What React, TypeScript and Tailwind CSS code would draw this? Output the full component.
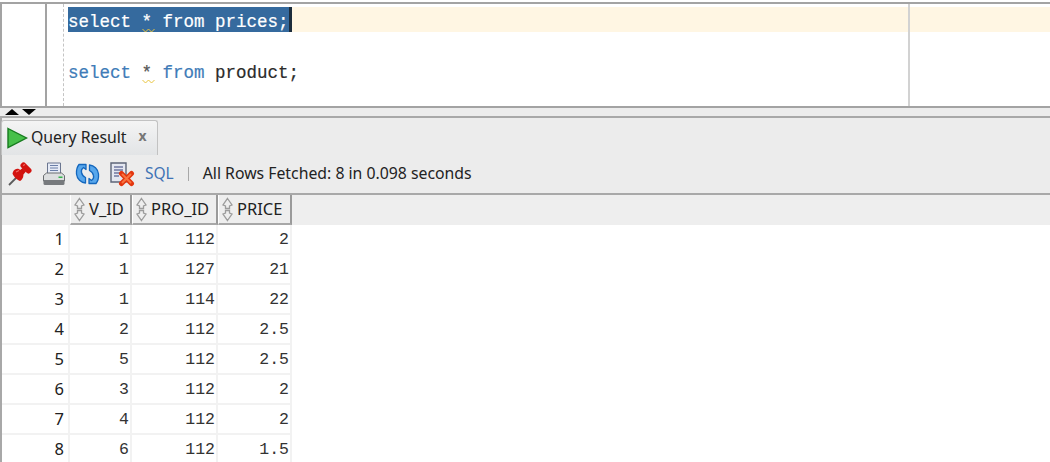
const rows = [
  [1, 1, 112, "2"],
  [2, 1, 127, "21"],
  [3, 1, 114, "22"],
  [4, 2, 112, "2.5"],
  [5, 5, 112, "2.5"],
  [6, 3, 112, "2"],
  [7, 4, 112, "2"],
  [8, 6, 112, "1.5"],
];

const columns = [
  { name: "V_ID", width: "w-[62px]" },
  { name: "PRO_ID", width: "w-[86px]" },
  { name: "PRICE", width: "w-[74px]" },
];

function Squiggle() {
  return (
    <svg width="13" height="5" viewBox="0 0 13 5" className="absolute left-[78px] top-[21px]">
      <path d="M0.5 1l3 3 3-3 3 3 3-3" fill="none" stroke="#e9c53f" strokeWidth="1" />
    </svg>
  );
}

function SortIcon() {
  return (
    <svg width="13" height="25" viewBox="0 0 13 25" className="shrink-0">
      <path d="M6.5 1.5L11 8l-2.5 1v2.5h-4V9L2 8z" fill="#eeeeee" stroke="#9c9c9c" strokeWidth="1.3" />
      <path d="M6.5 23.5L11 17l-2.5-1v-2.5h-4V16L2 17z" fill="#eeeeee" stroke="#9c9c9c" strokeWidth="1.3" />
    </svg>
  );
}

function PinIcon() {
  return (
    <svg width="24" height="24" viewBox="0 0 24 24">
      <path d="M1 23l8-8" stroke="#5a5a5a" strokeWidth="1.8" />
      <path d="M15.5 3.5l5 5" stroke="#d3130f" strokeWidth="6" strokeLinecap="round" />
      <path d="M14.5 6l3.5 3.5-3.5 4-4-4z" fill="#cf120e" />
      <path d="M7 7.5c2-1.2 4-.8 6 1s3 4.500 2 7c-.6 1.500-2 3-3 3.500-3-1-6.500-4.500-7.500-7.500.3-1.500 1-3 2.500-4z" fill="#d3130f" />
      <path d="M8 10l3-1.500" stroke="#f0706a" strokeWidth="1.2" />
      <path d="M15 3.500l2-1" stroke="#f0706a" strokeWidth="1.2" />
    </svg>
  );
}

function PrinterIcon() {
  return (
    <svg width="24" height="24" viewBox="0 0 24 24">
      <path d="M5.500 1h13v11h-13z" fill="#e6ebf6" stroke="#6b7690" />
      <path d="M8 3.500h8M8 6h8M8 8.500h8" stroke="#6b7fa8" />
      <path d="M1.500 13.500L4.500 11h15l3 2.500V19h-21z" fill="#dcdedf" stroke="#6a6d70" />
      <path d="M1.500 18h21v3.500a1.500 1.500 0 0 1-1.500 1.500H3a1.500 1.500 0 0 1-1.500-1.500z" fill="#777a7d" />
      <path d="M16.500 14.500h4v1.500h-4z" fill="#35b54a" />
    </svg>
  );
}

function RefreshIcon() {
  return (
    <svg width="25" height="24" viewBox="0 0 25 24">
      <path d="M4 2.500h7v5l-2.500-2c-1.500 1-2.500 3-2 5 .5 2.500 2 4 4 5V21C6 20.500 2 17 1.500 12 1.200 8.500 2 5 4 2.500z" fill="#58a7ec" stroke="#1467bd" strokeWidth="1.3" strokeLinejoin="round" />
      <path d="M21 21.500h-7v-5l2.500 2c1.500-1 2.500-3 2-5-.5-2.500-2-4-4-5V3c4.500.5 8.500 4 9 9 .3 3.500-.5 7-2.500 9.500z" fill="#58a7ec" stroke="#1467bd" strokeWidth="1.3" strokeLinejoin="round" />
    </svg>
  );
}

function ClearIcon() {
  return (
    <svg width="26" height="26" viewBox="0 0 26 26">
      <path d="M2 2h15v19H2z" fill="#e4e7f0" stroke="#5d6578" strokeWidth="1.4" />
      <path d="M5 6h9M5 9h9M5 12h6M5 15h5" stroke="#6f78a0" strokeWidth="1.4" />
      <path d="M12.500 12.500l10 10M22.500 12.500l-10 10" stroke="#e3360f" strokeWidth="5" strokeLinecap="round" />
      <path d="M13.500 13.500l8 8M21.500 13.500l-8 8" stroke="#f9733f" strokeWidth="2" strokeLinecap="round" />
    </svg>
  );
}

export default function App() {
  return (
    <div className="w-[1050px] h-[462px] overflow-hidden bg-[#ececec] font-['Noto_Sans',sans-serif] text-[#222]">
      {/* Editor */}
      <div className="h-[108px] pt-[2px] bg-white">
        <div className="h-[106px] border-t-2 border-b-2 border-t-[#a3a3a3] border-b-[#a3a3a3] flex bg-white">
          <div className="w-[47px] shrink-0 border-l-2 border-l-[#a3a3a3] border-r-2 border-r-[#a3a3a3]"></div>
          <div className="w-[17px] shrink-0 border-r border-dashed border-r-[#c4c4c4]"></div>
          <div className="flex-1 relative pt-[3px] font-['Liberation_Mono',monospace] text-[17.5px] leading-[31px] [-webkit-text-stroke:0.2px]">
            <div className="absolute left-[4px] right-0 top-[3px] h-[25px] bg-[#fff6e3]"></div>
            <div className="absolute left-[844px] top-0 bottom-0 w-[2px] bg-[#d2d2d2]"></div>
            <div className="relative pl-[4px] flex h-[25px]">
              <div className="bg-[#356a9e] text-white border-r-[3px] border-r-[#1c2d3d] whitespace-pre">select * from prices;</div>
              <Squiggle />
            </div>
            <div className="relative pl-[4px] mt-[26px] h-[25px] whitespace-pre text-[#2b2b2b]">
              <span className="text-[#3f7cb8]">select</span> <span className="text-[#555]">*</span>{" "}
              <span className="text-[#3f7cb8]">from</span> product;
              <Squiggle />
            </div>
          </div>
        </div>
      </div>

      {/* Splitter */}
      <div className="h-[10px] bg-[#ececec] border-b-2 border-b-[#a8a8a8] flex items-start gap-[3px] pl-[5px] pt-[1px]">
        <div className="w-0 h-0 border-x-[7px] border-x-transparent border-b-[6px] border-b-black"></div>
        <div className="w-0 h-0 border-x-[7px] border-x-transparent border-t-[6px] border-t-black"></div>
      </div>

      {/* Results panel */}
      <div className="border-l-2 border-l-[#a8a8a8]">
        <div className="h-[37px] pt-[2px] flex items-end">
          <div className="w-[157px] h-[35px] border border-b-0 border-[#c2c2c2] rounded-t-[3px] bg-gradient-to-b from-[#f4f4f4] to-[#e2e4e6] flex items-center pl-[4px] -ml-[1px]">
            <svg width="22" height="22" viewBox="0 0 22 22" className="shrink-0">
              <path d="M2 1.500L20.500 11 2 20.500z" fill="#47c04a" stroke="#167a1e" strokeWidth="1.4" />
            </svg>
            <span className="ml-[3px] text-[15.8px] whitespace-nowrap">Query Result</span>
            <span className="ml-[12px] mb-[5px] text-[14px] font-bold text-[#777]">x</span>
          </div>
        </div>
        <div className="h-[38px] flex items-center pl-[6px] bg-[#ececec]">
          <PinIcon />
          <div className="ml-[10px]"><PrinterIcon /></div>
          <div className="ml-[9px]"><RefreshIcon /></div>
          <div className="ml-[9px]"><ClearIcon /></div>
          <span className="ml-[10px] text-[15.5px] text-[#3f73b5]">SQL</span>
          <div className="ml-[14px] w-px h-[14px] bg-[#a8a8a8]"></div>
          <span className="ml-[14px] text-[15.8px] whitespace-nowrap">All Rows Fetched: 8 in 0.098 seconds</span>
        </div>

        {/* Grid */}
        <div className="border-t-2 border-t-[#a8a8a8] bg-white">
          <div className="flex h-[30px] bg-[#eeeeee]">
            <div className="w-[68px] shrink-0"></div>
            {columns.map((col) => (
              <div
                key={col.name}
                className={`${col.width} shrink-0 flex items-center gap-[3px] pl-[2px] border-r-2 border-b-2 border-r-[#9a9a9a] border-b-[#a8a8a8] border-l border-l-white text-[16.5px] whitespace-nowrap`}
              >
                <SortIcon />
                <span>{col.name}</span>
              </div>
            ))}
          </div>
          {rows.map((row) => (
            <div key={row[0]} className="flex h-[30px] items-center font-['Liberation_Mono',monospace] text-[16.5px] text-[#333]">
              <div className="w-[68px] h-full shrink-0 flex items-center justify-end pr-[4px] border-b-2 border-r-2 border-[#f2f2f2] font-['Noto_Sans',sans-serif] text-[#222]">
                {row[0]}
              </div>
              {row.slice(1).map((val, i) => (
                <div
                  key={i}
                  className={`${columns[i].width} h-full shrink-0 flex items-center justify-end pr-[1px] pt-[2px] border-b-2 border-r-2 border-[#f2f2f2]`}
                >
                  {val}
                </div>
              ))}
            </div>
          ))}
        </div>
      </div>
    </div>
  );
}
